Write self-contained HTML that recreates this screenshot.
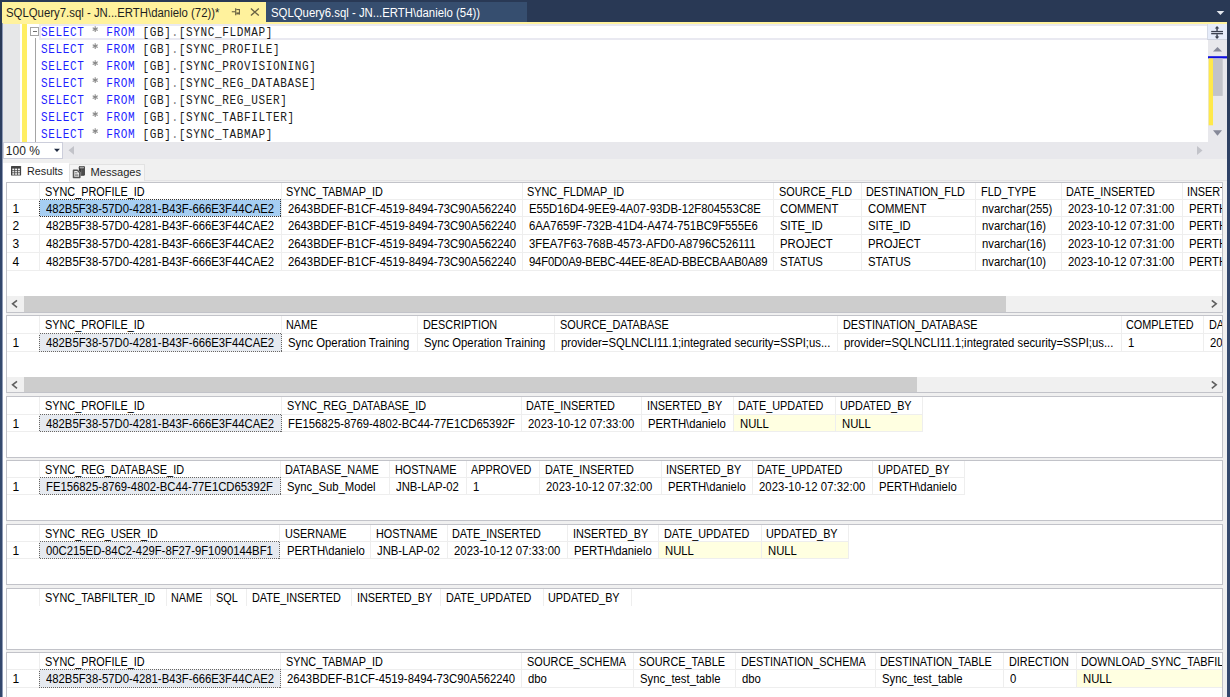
<!DOCTYPE html>
<html><head><meta charset="utf-8"><style>
*{margin:0;padding:0;box-sizing:border-box}
html,body{width:1230px;height:697px;overflow:hidden;background:#293955;font-family:"Liberation Sans",sans-serif}
.abs{position:absolute}
#tab1{position:absolute;left:2px;top:2px;width:264px;height:21px;background:#FFF29D;color:#1E1E1E;font-size:12px;line-height:23.5px;padding-left:3.9px;white-space:pre}
#tab2{position:absolute;left:266px;top:2px;width:261px;height:20px;background:#364E6F;color:#FFFFFF;font-size:12px;line-height:23.5px;padding-left:5px;white-space:pre}
#tabline{position:absolute;left:2px;top:22px;width:1225px;height:1.5px;background:#FFF29D}
#editor{position:absolute;left:2.5px;top:23.5px;width:1205px;height:118.5px;background:#FFFFFF;overflow:hidden}
#margin{position:absolute;left:2.5px;top:23.5px;width:17.5px;height:118.5px;background:#E6E7E8}
#ybar{position:absolute;left:22.4px;top:23.5px;width:5px;height:118.5px;background:#FFEE62}
#curline{position:absolute;left:39px;top:23.8px;width:1168px;height:16.2px;border:2px solid #E9E9F1;border-right:none}
#cbox{position:absolute;left:30px;top:27.3px;width:9px;height:9px;border:1px solid #A5A5A5;background:#fff}
#cbox:after{content:"";position:absolute;left:1.5px;top:3px;width:4px;height:1.2px;background:#707070}
#vline{position:absolute;left:34.5px;top:38px;width:1px;height:104px;background:#A5A5A5}
.cl{position:absolute;left:40.9px;height:17px;line-height:17px;font-family:"Liberation Mono",monospace;font-size:12px;letter-spacing:0.68px;color:#1A1A1A;white-space:pre;transform:scaleX(0.92);transform-origin:0 50%}
.kw{color:#1F1FFF} .op{color:#808080}
#vscroll{position:absolute;left:1207.5px;top:23.5px;width:19.5px;height:135px;background:#E8E8EC}
#split{position:absolute;left:1207.3px;top:23.5px;width:19.7px;height:16.8px;background:#E6ECFA;border-bottom:1px solid #CDD2DE;border-left:1px solid #D5DAE6}
#hscroll{position:absolute;left:2.5px;top:142px;width:1205px;height:16.6px;background:#E8E8EC}
#zoom{position:absolute;left:3px;top:142px;width:59.5px;height:16.5px;background:#fff;border:1px solid #CCCEDB;font-size:12px;line-height:16.5px;padding-left:1.8px;color:#1E1E1E}
#results{position:absolute;left:2.5px;top:158.6px;width:1224.3px;height:540px;background:#F0F0F0}
#lwhite{position:absolute;left:2.5px;top:163px;width:3.5px;height:540px;background:#FFFFFF}
#ledge{position:absolute;left:2px;top:23px;width:1px;height:674px;background:#8E9AB5}
#redge{position:absolute;left:1226px;top:23px;width:1px;height:674px;background:#A8B0C6}
#tabsline{position:absolute;left:68.5px;top:180px;width:1158px;height:1px;background:#E3E3E5}
#rtab{position:absolute;left:3px;top:163px;width:65.5px;height:19px;background:#FFFFFF;font-size:10.8px;line-height:16px;padding-left:24px;color:#1E1E1E}
#mtab{position:absolute;left:69px;top:164px;width:75.5px;height:16.5px;background:#F5F5F5;border:1px solid #E2E2E2;border-bottom:none;font-size:11.1px;line-height:14.5px;padding-left:20.5px;color:#1E1E1E}
.grid{position:absolute;left:6px;width:1217px;background:#fff;border:1px solid #C2C3C9;overflow:hidden}
.hc{position:absolute;top:0;border-right:1px solid #EEEEEE;border-bottom:1px solid #EEEEEE;font-size:12px;padding-left:4.6px;line-height:19.8px;white-space:pre;overflow:hidden;color:#000}
.rhc{position:absolute;top:0;border-right:1px solid #EEEEEE;border-bottom:1px solid #EEEEEE}
.rn{position:absolute;left:0;width:33px;border-right:1px solid #EEEEEE;border-bottom:1px solid #EEEEEE;font-size:12px;padding-left:5.5px;line-height:18.5px;color:#000}
.dc{position:absolute;border-right:1px solid #EEEEEE;border-bottom:1px solid #EEEEEE;font-size:12px;padding-left:6.2px;line-height:18px;white-space:pre;overflow:hidden;color:#000}
.t{display:inline-block;transform-origin:0 50%}
.tt{transform:scaleX(0.948)}
.th{transform:scaleX(0.905)}
.td{transform:scaleX(0.942)}
.nul{background:#FFFFE1}
.sel{background:#A6CEF2}
.sel2{background:#E6EAF0}
.hs{position:absolute;left:0;bottom:0;width:100%;height:15.5px;background:#F0F0F0}
.hst{position:absolute;top:0;height:15.5px;background:#CDCDCD}
.hsl,.hsr{position:absolute;top:-2px;font-size:16px;color:#606060;line-height:18px}
.hsl{left:5px} .hsr{right:7px}
#rborder{position:absolute;left:1226.8px;top:23px;width:4px;height:674px;background:linear-gradient(to bottom,#293955 0%,#2A3A57 5.5%,#30446A 26.3%,#354A6D 55.9%,#33476C 100%)}
#lborder{position:absolute;left:0;top:23px;width:2.2px;height:674px;background:linear-gradient(to bottom,#293955 0%,#2A3A57 5.5%,#30446A 26.3%,#354A6D 55.9%,#33476C 100%)}
</style></head>
<body>
<div id="tab1"><span class="t tt">SQLQuery7.sql - JN...ERTH\danielo (72))*</span></div>
<div id="tab2"><span class="t tt">SQLQuery6.sql - JN...ERTH\danielo (54))</span></div>
<div id="tabline"></div>
<div id="editor"></div>
<div id="margin"></div>
<div id="ybar"></div>
<div id="curline"></div>
<div id="cbox"></div>
<div id="vline"></div>
<div class="cl" style="top:24.5px"><span class="kw">SELECT</span> <span class="op"> </span> <span class="kw">FROM</span> [GB]<span class="op">.</span>[SYNC_FLDMAP]</div>
<div class="cl" style="top:41.5px"><span class="kw">SELECT</span> <span class="op"> </span> <span class="kw">FROM</span> [GB]<span class="op">.</span>[SYNC_PROFILE]</div>
<div class="cl" style="top:58.5px"><span class="kw">SELECT</span> <span class="op"> </span> <span class="kw">FROM</span> [GB]<span class="op">.</span>[SYNC_PROVISIONING]</div>
<div class="cl" style="top:75.5px"><span class="kw">SELECT</span> <span class="op"> </span> <span class="kw">FROM</span> [GB]<span class="op">.</span>[SYNC_REG_DATABASE]</div>
<div class="cl" style="top:92.5px"><span class="kw">SELECT</span> <span class="op"> </span> <span class="kw">FROM</span> [GB]<span class="op">.</span>[SYNC_REG_USER]</div>
<div class="cl" style="top:109.5px"><span class="kw">SELECT</span> <span class="op"> </span> <span class="kw">FROM</span> [GB]<span class="op">.</span>[SYNC_TABFILTER]</div>
<div class="cl" style="top:126.5px"><span class="kw">SELECT</span> <span class="op"> </span> <span class="kw">FROM</span> [GB]<span class="op">.</span>[SYNC_TABMAP]</div>
<div id="vscroll"></div>
<div id="split"></div>
<div id="hscroll"></div>
<div id="zoom">100 %</div>
<div id="results"></div>
<div id="lwhite"></div>
<div id="tabsline"></div>
<div id="rtab">Results</div>
<div id="mtab">Messages</div>
<div class="grid" style="top:181.5px;height:131.2px">
<div class="hc" style="left:33px;width:241.5px;height:17.19999999999999px"><span class="t th">SYNC_PROFILE_ID</span></div>
<div class="hc" style="left:274.5px;width:241.20000000000005px;height:17.19999999999999px"><span class="t th">SYNC_TABMAP_ID</span></div>
<div class="hc" style="left:515.7px;width:251.29999999999995px;height:17.19999999999999px"><span class="t th">SYNC_FLDMAP_ID</span></div>
<div class="hc" style="left:767px;width:87.5px;height:17.19999999999999px"><span class="t th">SOURCE_FLD</span></div>
<div class="hc" style="left:854.5px;width:114.5px;height:17.19999999999999px"><span class="t th">DESTINATION_FLD</span></div>
<div class="hc" style="left:969px;width:85.59999999999991px;height:17.19999999999999px"><span class="t th">FLD_TYPE</span></div>
<div class="hc" style="left:1054.6px;width:121.10000000000014px;height:17.19999999999999px"><span class="t th">DATE_INSERTED</span></div>
<div class="hc" style="left:1175.7px;width:217.29999999999995px;height:17.19999999999999px"><span class="t th">INSERTED_BY</span></div>
<div class="rhc" style="left:0;width:33px;height:17.19999999999999px"></div>
<div class="rn" style="top:17.19999999999999px;height:17.72500000000001px">1</div>
<div class="dc sel" style="left:33px;top:17.19999999999999px;width:241.5px;height:17.72500000000001px"><span class="t td">482B5F38-57D0-4281-B43F-666E3F44CAE2</span></div>
<div class="dc" style="left:274.5px;top:17.19999999999999px;width:241.20000000000005px;height:17.72500000000001px"><span class="t td">2643BDEF-B1CF-4519-8494-73C90A562240</span></div>
<div class="dc" style="left:515.7px;top:17.19999999999999px;width:251.29999999999995px;height:17.72500000000001px"><span class="t td">E55D16D4-9EE9-4A07-93DB-12F804553C8E</span></div>
<div class="dc" style="left:767px;top:17.19999999999999px;width:87.5px;height:17.72500000000001px"><span class="t td">COMMENT</span></div>
<div class="dc" style="left:854.5px;top:17.19999999999999px;width:114.5px;height:17.72500000000001px"><span class="t td">COMMENT</span></div>
<div class="dc" style="left:969px;top:17.19999999999999px;width:85.59999999999991px;height:17.72500000000001px"><span class="t td">nvarchar(255)</span></div>
<div class="dc" style="left:1054.6px;top:17.19999999999999px;width:121.10000000000014px;height:17.72500000000001px;letter-spacing:0.08px"><span class="t td">2023-10-12 07:31:00</span></div>
<div class="dc" style="left:1175.7px;top:17.19999999999999px;width:217.29999999999995px;height:17.72500000000001px"><span class="t td">PERTH\danielo</span></div>
<div class="rn" style="top:34.925px;height:17.72500000000001px">2</div>
<div class="dc" style="left:33px;top:34.925px;width:241.5px;height:17.72500000000001px"><span class="t td">482B5F38-57D0-4281-B43F-666E3F44CAE2</span></div>
<div class="dc" style="left:274.5px;top:34.925px;width:241.20000000000005px;height:17.72500000000001px"><span class="t td">2643BDEF-B1CF-4519-8494-73C90A562240</span></div>
<div class="dc" style="left:515.7px;top:34.925px;width:251.29999999999995px;height:17.72500000000001px"><span class="t td">6AA7659F-732B-41D4-A474-751BC9F555E6</span></div>
<div class="dc" style="left:767px;top:34.925px;width:87.5px;height:17.72500000000001px"><span class="t td">SITE_ID</span></div>
<div class="dc" style="left:854.5px;top:34.925px;width:114.5px;height:17.72500000000001px"><span class="t td">SITE_ID</span></div>
<div class="dc" style="left:969px;top:34.925px;width:85.59999999999991px;height:17.72500000000001px"><span class="t td">nvarchar(16)</span></div>
<div class="dc" style="left:1054.6px;top:34.925px;width:121.10000000000014px;height:17.72500000000001px;letter-spacing:0.08px"><span class="t td">2023-10-12 07:31:00</span></div>
<div class="dc" style="left:1175.7px;top:34.925px;width:217.29999999999995px;height:17.72500000000001px"><span class="t td">PERTH\danielo</span></div>
<div class="rn" style="top:52.650000000000006px;height:17.72500000000001px">3</div>
<div class="dc" style="left:33px;top:52.650000000000006px;width:241.5px;height:17.72500000000001px"><span class="t td">482B5F38-57D0-4281-B43F-666E3F44CAE2</span></div>
<div class="dc" style="left:274.5px;top:52.650000000000006px;width:241.20000000000005px;height:17.72500000000001px"><span class="t td">2643BDEF-B1CF-4519-8494-73C90A562240</span></div>
<div class="dc" style="left:515.7px;top:52.650000000000006px;width:251.29999999999995px;height:17.72500000000001px"><span class="t td">3FEA7F63-768B-4573-AFD0-A8796C526111</span></div>
<div class="dc" style="left:767px;top:52.650000000000006px;width:87.5px;height:17.72500000000001px"><span class="t td">PROJECT</span></div>
<div class="dc" style="left:854.5px;top:52.650000000000006px;width:114.5px;height:17.72500000000001px"><span class="t td">PROJECT</span></div>
<div class="dc" style="left:969px;top:52.650000000000006px;width:85.59999999999991px;height:17.72500000000001px"><span class="t td">nvarchar(16)</span></div>
<div class="dc" style="left:1054.6px;top:52.650000000000006px;width:121.10000000000014px;height:17.72500000000001px;letter-spacing:0.08px"><span class="t td">2023-10-12 07:31:00</span></div>
<div class="dc" style="left:1175.7px;top:52.650000000000006px;width:217.29999999999995px;height:17.72500000000001px"><span class="t td">PERTH\danielo</span></div>
<div class="rn" style="top:70.37500000000001px;height:17.72500000000001px">4</div>
<div class="dc" style="left:33px;top:70.37500000000001px;width:241.5px;height:17.72500000000001px"><span class="t td">482B5F38-57D0-4281-B43F-666E3F44CAE2</span></div>
<div class="dc" style="left:274.5px;top:70.37500000000001px;width:241.20000000000005px;height:17.72500000000001px"><span class="t td">2643BDEF-B1CF-4519-8494-73C90A562240</span></div>
<div class="dc" style="left:515.7px;top:70.37500000000001px;width:251.29999999999995px;height:17.72500000000001px;letter-spacing:-0.18px"><span class="t td">94F0D0A9-BEBC-44EE-8EAD-BBECBAAB0A89</span></div>
<div class="dc" style="left:767px;top:70.37500000000001px;width:87.5px;height:17.72500000000001px"><span class="t td">STATUS</span></div>
<div class="dc" style="left:854.5px;top:70.37500000000001px;width:114.5px;height:17.72500000000001px"><span class="t td">STATUS</span></div>
<div class="dc" style="left:969px;top:70.37500000000001px;width:85.59999999999991px;height:17.72500000000001px"><span class="t td">nvarchar(10)</span></div>
<div class="dc" style="left:1054.6px;top:70.37500000000001px;width:121.10000000000014px;height:17.72500000000001px;letter-spacing:0.08px"><span class="t td">2023-10-12 07:31:00</span></div>
<div class="dc" style="left:1175.7px;top:70.37500000000001px;width:217.29999999999995px;height:17.72500000000001px"><span class="t td">PERTH\danielo</span></div>
<div class="hs"><div class="hst" style="left:17px;width:981.6px"></div></div>
</div><div class="grid" style="top:314.9px;height:78.60000000000002px">
<div class="hc" style="left:33px;width:241.60000000000002px;height:17.900000000000034px"><span class="t th">SYNC_PROFILE_ID</span></div>
<div class="hc" style="left:274.6px;width:136.59999999999997px;height:17.900000000000034px"><span class="t th">NAME</span></div>
<div class="hc" style="left:411.2px;width:136.8px;height:17.900000000000034px"><span class="t th">DESCRIPTION</span></div>
<div class="hc" style="left:548px;width:283.1px;height:17.900000000000034px"><span class="t th">SOURCE_DATABASE</span></div>
<div class="hc" style="left:831.1px;width:283.6px;height:17.900000000000034px"><span class="t th">DESTINATION_DATABASE</span></div>
<div class="hc" style="left:1114.7px;width:82.29999999999995px;height:17.900000000000034px"><span class="t th">COMPLETED</span></div>
<div class="hc" style="left:1197px;width:196px;height:17.900000000000034px"><span class="t th">DATE_INSERTED</span></div>
<div class="rhc" style="left:0;width:33px;height:17.900000000000034px"></div>
<div class="rn" style="top:17.900000000000034px;height:17.899999999999977px">1</div>
<div class="dc sel2" style="left:33px;top:17.900000000000034px;width:241.60000000000002px;height:17.899999999999977px"><span class="t td">482B5F38-57D0-4281-B43F-666E3F44CAE2</span></div>
<div class="dc" style="left:274.6px;top:17.900000000000034px;width:136.59999999999997px;height:17.899999999999977px"><span class="t td">Sync Operation Training</span></div>
<div class="dc" style="left:411.2px;top:17.900000000000034px;width:136.8px;height:17.899999999999977px"><span class="t td">Sync Operation Training</span></div>
<div class="dc" style="left:548px;top:17.900000000000034px;width:283.1px;height:17.899999999999977px"><span class="t td">provider=SQLNCLI11.1;integrated security=SSPI;us...</span></div>
<div class="dc" style="left:831.1px;top:17.900000000000034px;width:283.6px;height:17.899999999999977px"><span class="t td">provider=SQLNCLI11.1;integrated security=SSPI;us...</span></div>
<div class="dc" style="left:1114.7px;top:17.900000000000034px;width:82.29999999999995px;height:17.899999999999977px"><span class="t td">1</span></div>
<div class="dc" style="left:1197px;top:17.900000000000034px;width:196px;height:17.899999999999977px;letter-spacing:0.08px"><span class="t td">2023-10-12 07:31:00</span></div>
<div class="hs"><div class="hst" style="left:17px;width:893px"></div></div>
</div><div class="grid" style="top:396.0px;height:61.69999999999999px">
<div class="hc" style="left:33px;width:242px;height:17.5px"><span class="t th">SYNC_PROFILE_ID</span></div>
<div class="hc" style="left:275px;width:239.79999999999995px;height:17.5px"><span class="t th">SYNC_REG_DATABASE_ID</span></div>
<div class="hc" style="left:514.8px;width:120.40000000000009px;height:17.5px"><span class="t th">DATE_INSERTED</span></div>
<div class="hc" style="left:635.2px;width:91.5px;height:17.5px"><span class="t th">INSERTED_BY</span></div>
<div class="hc" style="left:726.7px;width:101.89999999999998px;height:17.5px"><span class="t th">DATE_UPDATED</span></div>
<div class="hc" style="left:828.6px;width:87.79999999999995px;height:17.5px"><span class="t th">UPDATED_BY</span></div>
<div class="rhc" style="left:0;width:33px;height:17.5px"></div>
<div class="rn" style="top:17.5px;height:17.19999999999999px">1</div>
<div class="dc sel2" style="left:33px;top:17.5px;width:242px;height:17.19999999999999px"><span class="t td">482B5F38-57D0-4281-B43F-666E3F44CAE2</span></div>
<div class="dc" style="left:275px;top:17.5px;width:239.79999999999995px;height:17.19999999999999px"><span class="t td">FE156825-8769-4802-BC44-77E1CD65392F</span></div>
<div class="dc" style="left:514.8px;top:17.5px;width:120.40000000000009px;height:17.19999999999999px;letter-spacing:0.08px"><span class="t td">2023-10-12 07:33:00</span></div>
<div class="dc" style="left:635.2px;top:17.5px;width:91.5px;height:17.19999999999999px"><span class="t td">PERTH\danielo</span></div>
<div class="dc nul" style="left:726.7px;top:17.5px;width:101.89999999999998px;height:17.19999999999999px"><span class="t td">NULL</span></div>
<div class="dc nul" style="left:828.6px;top:17.5px;width:87.79999999999995px;height:17.19999999999999px"><span class="t td">NULL</span></div>
</div><div class="grid" style="top:459.8px;height:61.69999999999999px">
<div class="hc" style="left:33px;width:240.5px;height:17.19999999999999px"><span class="t th">SYNC_REG_DATABASE_ID</span></div>
<div class="hc" style="left:273.5px;width:109.5px;height:17.19999999999999px"><span class="t th">DATABASE_NAME</span></div>
<div class="hc" style="left:383px;width:76.5px;height:17.19999999999999px"><span class="t th">HOSTNAME</span></div>
<div class="hc" style="left:459.5px;width:73.79999999999995px;height:17.19999999999999px"><span class="t th">APPROVED</span></div>
<div class="hc" style="left:533.3px;width:121.40000000000009px;height:17.19999999999999px"><span class="t th">DATE_INSERTED</span></div>
<div class="hc" style="left:654.7px;width:91.09999999999991px;height:17.19999999999999px"><span class="t th">INSERTED_BY</span></div>
<div class="hc" style="left:745.8px;width:120.5px;height:17.19999999999999px"><span class="t th">DATE_UPDATED</span></div>
<div class="hc" style="left:866.3px;width:91.70000000000005px;height:17.19999999999999px"><span class="t th">UPDATED_BY</span></div>
<div class="rhc" style="left:0;width:33px;height:17.19999999999999px"></div>
<div class="rn" style="top:17.19999999999999px;height:17.5px">1</div>
<div class="dc sel2" style="left:33px;top:17.19999999999999px;width:240.5px;height:17.5px"><span class="t td">FE156825-8769-4802-BC44-77E1CD65392F</span></div>
<div class="dc" style="left:273.5px;top:17.19999999999999px;width:109.5px;height:17.5px"><span class="t td">Sync_Sub_Model</span></div>
<div class="dc" style="left:383px;top:17.19999999999999px;width:76.5px;height:17.5px"><span class="t td">JNB-LAP-02</span></div>
<div class="dc" style="left:459.5px;top:17.19999999999999px;width:73.79999999999995px;height:17.5px"><span class="t td">1</span></div>
<div class="dc" style="left:533.3px;top:17.19999999999999px;width:121.40000000000009px;height:17.5px;letter-spacing:0.08px"><span class="t td">2023-10-12 07:32:00</span></div>
<div class="dc" style="left:654.7px;top:17.19999999999999px;width:91.09999999999991px;height:17.5px"><span class="t td">PERTH\danielo</span></div>
<div class="dc" style="left:745.8px;top:17.19999999999999px;width:120.5px;height:17.5px;letter-spacing:0.08px"><span class="t td">2023-10-12 07:32:00</span></div>
<div class="dc" style="left:866.3px;top:17.19999999999999px;width:91.70000000000005px;height:17.5px"><span class="t td">PERTH\danielo</span></div>
</div><div class="grid" style="top:523.8px;height:61.700000000000045px">
<div class="hc" style="left:33px;width:240.39999999999998px;height:17.200000000000045px"><span class="t th">SYNC_REG_USER_ID</span></div>
<div class="hc" style="left:273.4px;width:90.80000000000001px;height:17.200000000000045px"><span class="t th">USERNAME</span></div>
<div class="hc" style="left:364.2px;width:76.40000000000003px;height:17.200000000000045px"><span class="t th">HOSTNAME</span></div>
<div class="hc" style="left:440.6px;width:120.60000000000002px;height:17.200000000000045px"><span class="t th">DATE_INSERTED</span></div>
<div class="hc" style="left:561.2px;width:91.09999999999991px;height:17.200000000000045px"><span class="t th">INSERTED_BY</span></div>
<div class="hc" style="left:652.3px;width:102.5px;height:17.200000000000045px"><span class="t th">DATE_UPDATED</span></div>
<div class="hc" style="left:754.8px;width:87.20000000000005px;height:17.200000000000045px"><span class="t th">UPDATED_BY</span></div>
<div class="rhc" style="left:0;width:33px;height:17.200000000000045px"></div>
<div class="rn" style="top:17.200000000000045px;height:17.5px">1</div>
<div class="dc sel2" style="left:33px;top:17.200000000000045px;width:240.39999999999998px;height:17.5px"><span class="t td">00C215ED-84C2-429F-8F27-9F1090144BF1</span></div>
<div class="dc" style="left:273.4px;top:17.200000000000045px;width:90.80000000000001px;height:17.5px"><span class="t td">PERTH\danielo</span></div>
<div class="dc" style="left:364.2px;top:17.200000000000045px;width:76.40000000000003px;height:17.5px"><span class="t td">JNB-LAP-02</span></div>
<div class="dc" style="left:440.6px;top:17.200000000000045px;width:120.60000000000002px;height:17.5px;letter-spacing:0.08px"><span class="t td">2023-10-12 07:33:00</span></div>
<div class="dc" style="left:561.2px;top:17.200000000000045px;width:91.09999999999991px;height:17.5px"><span class="t td">PERTH\danielo</span></div>
<div class="dc nul" style="left:652.3px;top:17.200000000000045px;width:102.5px;height:17.5px"><span class="t td">NULL</span></div>
<div class="dc nul" style="left:754.8px;top:17.200000000000045px;width:87.20000000000005px;height:17.5px"><span class="t td">NULL</span></div>
</div><div class="grid" style="top:587.9px;height:61.89999999999998px">
<div class="hc" style="left:33px;width:126.5px;height:17.5px;border-bottom:none"><span class="t th">SYNC_TABFILTER_ID</span></div>
<div class="hc" style="left:159.5px;width:44.900000000000006px;height:17.5px;border-bottom:none"><span class="t th">NAME</span></div>
<div class="hc" style="left:204.4px;width:35.79999999999998px;height:17.5px;border-bottom:none"><span class="t th">SQL</span></div>
<div class="hc" style="left:240.2px;width:104.80000000000001px;height:17.5px;border-bottom:none"><span class="t th">DATE_INSERTED</span></div>
<div class="hc" style="left:345px;width:89.10000000000002px;height:17.5px;border-bottom:none"><span class="t th">INSERTED_BY</span></div>
<div class="hc" style="left:434.1px;width:102.79999999999995px;height:17.5px;border-bottom:none"><span class="t th">DATE_UPDATED</span></div>
<div class="hc" style="left:536.9px;width:88.10000000000002px;height:17.5px;border-bottom:none"><span class="t th">UPDATED_BY</span></div>
<div class="rhc" style="left:0;width:33px;height:17.5px;border-bottom:none"></div>
</div><div class="grid" style="top:651.9px;height:68.60000000000002px">
<div class="hc" style="left:33px;width:241.10000000000002px;height:17.5px"><span class="t th">SYNC_PROFILE_ID</span></div>
<div class="hc" style="left:274.1px;width:241.10000000000002px;height:17.5px"><span class="t th">SYNC_TABMAP_ID</span></div>
<div class="hc" style="left:515.2px;width:111.79999999999995px;height:17.5px"><span class="t th">SOURCE_SCHEMA</span></div>
<div class="hc" style="left:627px;width:102.10000000000002px;height:17.5px"><span class="t th">SOURCE_TABLE</span></div>
<div class="hc" style="left:729.1px;width:139.5px;height:17.5px"><span class="t th">DESTINATION_SCHEMA</span></div>
<div class="hc" style="left:868.6px;width:128.60000000000002px;height:17.5px"><span class="t th">DESTINATION_TABLE</span></div>
<div class="hc" style="left:997.2px;width:72.59999999999991px;height:17.5px"><span class="t th">DIRECTION</span></div>
<div class="hc" style="left:1069.8px;width:323.20000000000005px;height:17.5px"><span class="t th">DOWNLOAD_SYNC_TABFILTER_ID</span></div>
<div class="rhc" style="left:0;width:33px;height:17.5px"></div>
<div class="rn" style="top:17.5px;height:17.399999999999977px">1</div>
<div class="dc sel2" style="left:33px;top:17.5px;width:241.10000000000002px;height:17.399999999999977px"><span class="t td">482B5F38-57D0-4281-B43F-666E3F44CAE2</span></div>
<div class="dc" style="left:274.1px;top:17.5px;width:241.10000000000002px;height:17.399999999999977px"><span class="t td">2643BDEF-B1CF-4519-8494-73C90A562240</span></div>
<div class="dc" style="left:515.2px;top:17.5px;width:111.79999999999995px;height:17.399999999999977px"><span class="t td">dbo</span></div>
<div class="dc" style="left:627px;top:17.5px;width:102.10000000000002px;height:17.399999999999977px"><span class="t td">Sync_test_table</span></div>
<div class="dc" style="left:729.1px;top:17.5px;width:139.5px;height:17.399999999999977px"><span class="t td">dbo</span></div>
<div class="dc" style="left:868.6px;top:17.5px;width:128.60000000000002px;height:17.399999999999977px"><span class="t td">Sync_test_table</span></div>
<div class="dc" style="left:997.2px;top:17.5px;width:72.59999999999991px;height:17.399999999999977px"><span class="t td">0</span></div>
<div class="dc nul" style="left:1069.8px;top:17.5px;width:323.20000000000005px;height:17.399999999999977px"><span class="t td">NULL</span></div>
</div>
<svg width="1230" height="697" style="position:absolute;left:0;top:0"><rect x="39.5" y="199.5" width="241" height="17" fill="none" stroke="#333" stroke-width="1" stroke-dasharray="1 1" shape-rendering="crispEdges"/><rect x="39.5" y="333.5" width="242" height="18" fill="none" stroke="#666" stroke-width="1" stroke-dasharray="1 1" shape-rendering="crispEdges"/><rect x="39.5" y="414.5" width="242" height="17" fill="none" stroke="#666" stroke-width="1" stroke-dasharray="1 1" shape-rendering="crispEdges"/><rect x="39.5" y="477.5" width="241" height="17" fill="none" stroke="#666" stroke-width="1" stroke-dasharray="1 1" shape-rendering="crispEdges"/><rect x="39.5" y="541.5" width="240" height="17" fill="none" stroke="#666" stroke-width="1" stroke-dasharray="1 1" shape-rendering="crispEdges"/><rect x="39.5" y="669.5" width="241" height="18" fill="none" stroke="#666" stroke-width="1" stroke-dasharray="1 1" shape-rendering="crispEdges"/></svg>
<div id="rborder"></div>
<div id="lborder"></div>
<div id="ledge"></div>

<svg id="ov" width="1230" height="697" viewBox="0 0 1230 697" style="position:absolute;left:0;top:0;pointer-events:none">
 <!-- pin -->
 <g fill="#6B6444">
  <rect x="231.8" y="11.2" width="3.5" height="1.1"/>
  <rect x="235.1" y="8.2" width="1.2" height="7.1"/>
  <rect x="236.3" y="9" width="3.7" height="1.1"/>
  <rect x="238.9" y="9" width="1.1" height="5.4"/>
  <rect x="236.3" y="12.4" width="3.7" height="2"/>
 </g>
 <!-- close -->
 <path d="M250.9 8.5 L258.8 15.6 M258.8 8.5 L250.9 15.6" stroke="#6B6444" stroke-width="1.35" fill="none"/>
 <!-- tab dropdown -->
 <path d="M1216.6 10.9 L1224.3 10.9 L1220.45 15 Z" fill="#E4E7EE"/>
 <!-- zoom combo arrow -->
 <path d="M54 148.8 L59.9 148.8 L56.95 152.1 Z" fill="#1E2A40"/>
 <!-- editor hscroll left arrow -->
 <path d="M74 145.9 L74 154.7 L68.5 150.3 Z" fill="#C2C3C9"/>
 <!-- editor hscroll right arrow -->
 <path d="M1197 146 L1197 155 L1202.5 150.5 Z" fill="#C2C3C9"/>
 <!-- vscroll split icon -->
 <g fill="#3A4050">
  <rect x="1211.2" y="30.9" width="11.8" height="1.3"/>
  <rect x="1211.2" y="33" width="11.8" height="1.3"/>
  <rect x="1216.3" y="27.5" width="1.5" height="3.4"/>
  <rect x="1216.3" y="34.3" width="1.5" height="3.4"/>
  <path d="M1214.8 28.6 L1219.3 28.6 L1217.05 26 Z"/>
  <path d="M1214.8 36.6 L1219.3 36.6 L1217.05 39.1 Z"/>
 </g>
 <!-- vscroll up/down -->
 <path d="M1213 51.6 L1222 51.6 L1217.5 46.9 Z" fill="#868999"/>
 <path d="M1213 130.3 L1222 130.3 L1217.5 135.8 Z" fill="#868999"/>
 <rect x="1208" y="56.2" width="19" height="2.2" fill="#0F0FE0"/>
 <rect x="1208.7" y="58.4" width="4.3" height="66.9" fill="#FFE94A"/>
 <rect x="1213" y="58.4" width="9.7" height="37.5" fill="#C2C3C9"/>
 <!-- results tab grid icon -->
 <g>
  <rect x="11" y="166" width="10.1" height="9.6" rx="0.6" fill="#424242"/>
  <g fill="#F4F4F4">
   <rect x="12.3" y="168.6" width="2" height="1.7"/><rect x="15.1" y="168.6" width="2" height="1.7"/><rect x="17.9" y="168.6" width="2" height="1.7"/>
   <rect x="12.3" y="171.1" width="2" height="1.3"/><rect x="15.1" y="171.1" width="2" height="1.3"/><rect x="17.9" y="171.1" width="2" height="1.3"/>
   <rect x="12.3" y="173.2" width="2" height="1.5"/><rect x="15.1" y="173.2" width="2" height="1.5"/><rect x="17.9" y="173.2" width="2" height="1.5"/>
  </g>
 </g>
 <!-- messages icon -->
 <g>
  <rect x="78.8" y="166" width="6.1" height="9.7" rx="1.2" fill="#3A3A3A"/>
  <rect x="79.6" y="166.6" width="4.5" height="2" rx="0.8" fill="#A0A0A0"/>
  <rect x="80.9" y="169.2" width="0.8" height="5.6" fill="#6A6A6A"/>
  <rect x="82.6" y="169.2" width="0.8" height="5.6" fill="#6A6A6A"/>
  <path d="M72.6 169.4 L77.6 169.4 L80.6 172.2 L80.6 178.4 L72.6 178.4 Z" fill="#F0F0F0"/>
  <path d="M73.5 170.3 L77.3 170.3 L79.8 172.6 L79.8 177.6 L73.5 177.6 Z" fill="#EEEEEE" stroke="#555" stroke-width="1.5" stroke-linejoin="round"/>
  <rect x="74.8" y="172.3" width="2.6" height="1" fill="#777"/>
  <rect x="74.8" y="174.2" width="3.6" height="2" fill="#9A9A9A"/>
 </g>

 <!-- grid hscroll chevrons -->
 <path d="M17 300.3 L12.6 303.8 L17 307.3" stroke="#5F5F5F" stroke-width="1.6" fill="none"/>
 <path d="M1211.8 300.3 L1216.2 303.8 L1211.8 307.3" stroke="#5F5F5F" stroke-width="1.6" fill="none"/>
 <path d="M17 381.3 L12.6 384.8 L17 388.3" stroke="#5F5F5F" stroke-width="1.6" fill="none"/>
 <path d="M1211.8 381.3 L1216.2 384.8 L1211.8 388.3" stroke="#5F5F5F" stroke-width="1.6" fill="none"/>
 <path d="M95.20 26.20 L95.20 32.00 M97.71 27.65 L92.69 30.55 M92.69 27.65 L97.71 30.55 M95.20 43.20 L95.20 49.00 M97.71 44.65 L92.69 47.55 M92.69 44.65 L97.71 47.55 M95.20 60.20 L95.20 66.00 M97.71 61.65 L92.69 64.55 M92.69 61.65 L97.71 64.55 M95.20 77.20 L95.20 83.00 M97.71 78.65 L92.69 81.55 M92.69 78.65 L97.71 81.55 M95.20 94.20 L95.20 100.00 M97.71 95.65 L92.69 98.55 M92.69 95.65 L97.71 98.55 M95.20 111.20 L95.20 117.00 M97.71 112.65 L92.69 115.55 M92.69 112.65 L97.71 115.55 M95.20 128.20 L95.20 134.00 M97.71 129.65 L92.69 132.55 M92.69 129.65 L97.71 132.55 " stroke="#8A8A8A" stroke-width="1.1" fill="none"/>
</svg>
</body></html>
